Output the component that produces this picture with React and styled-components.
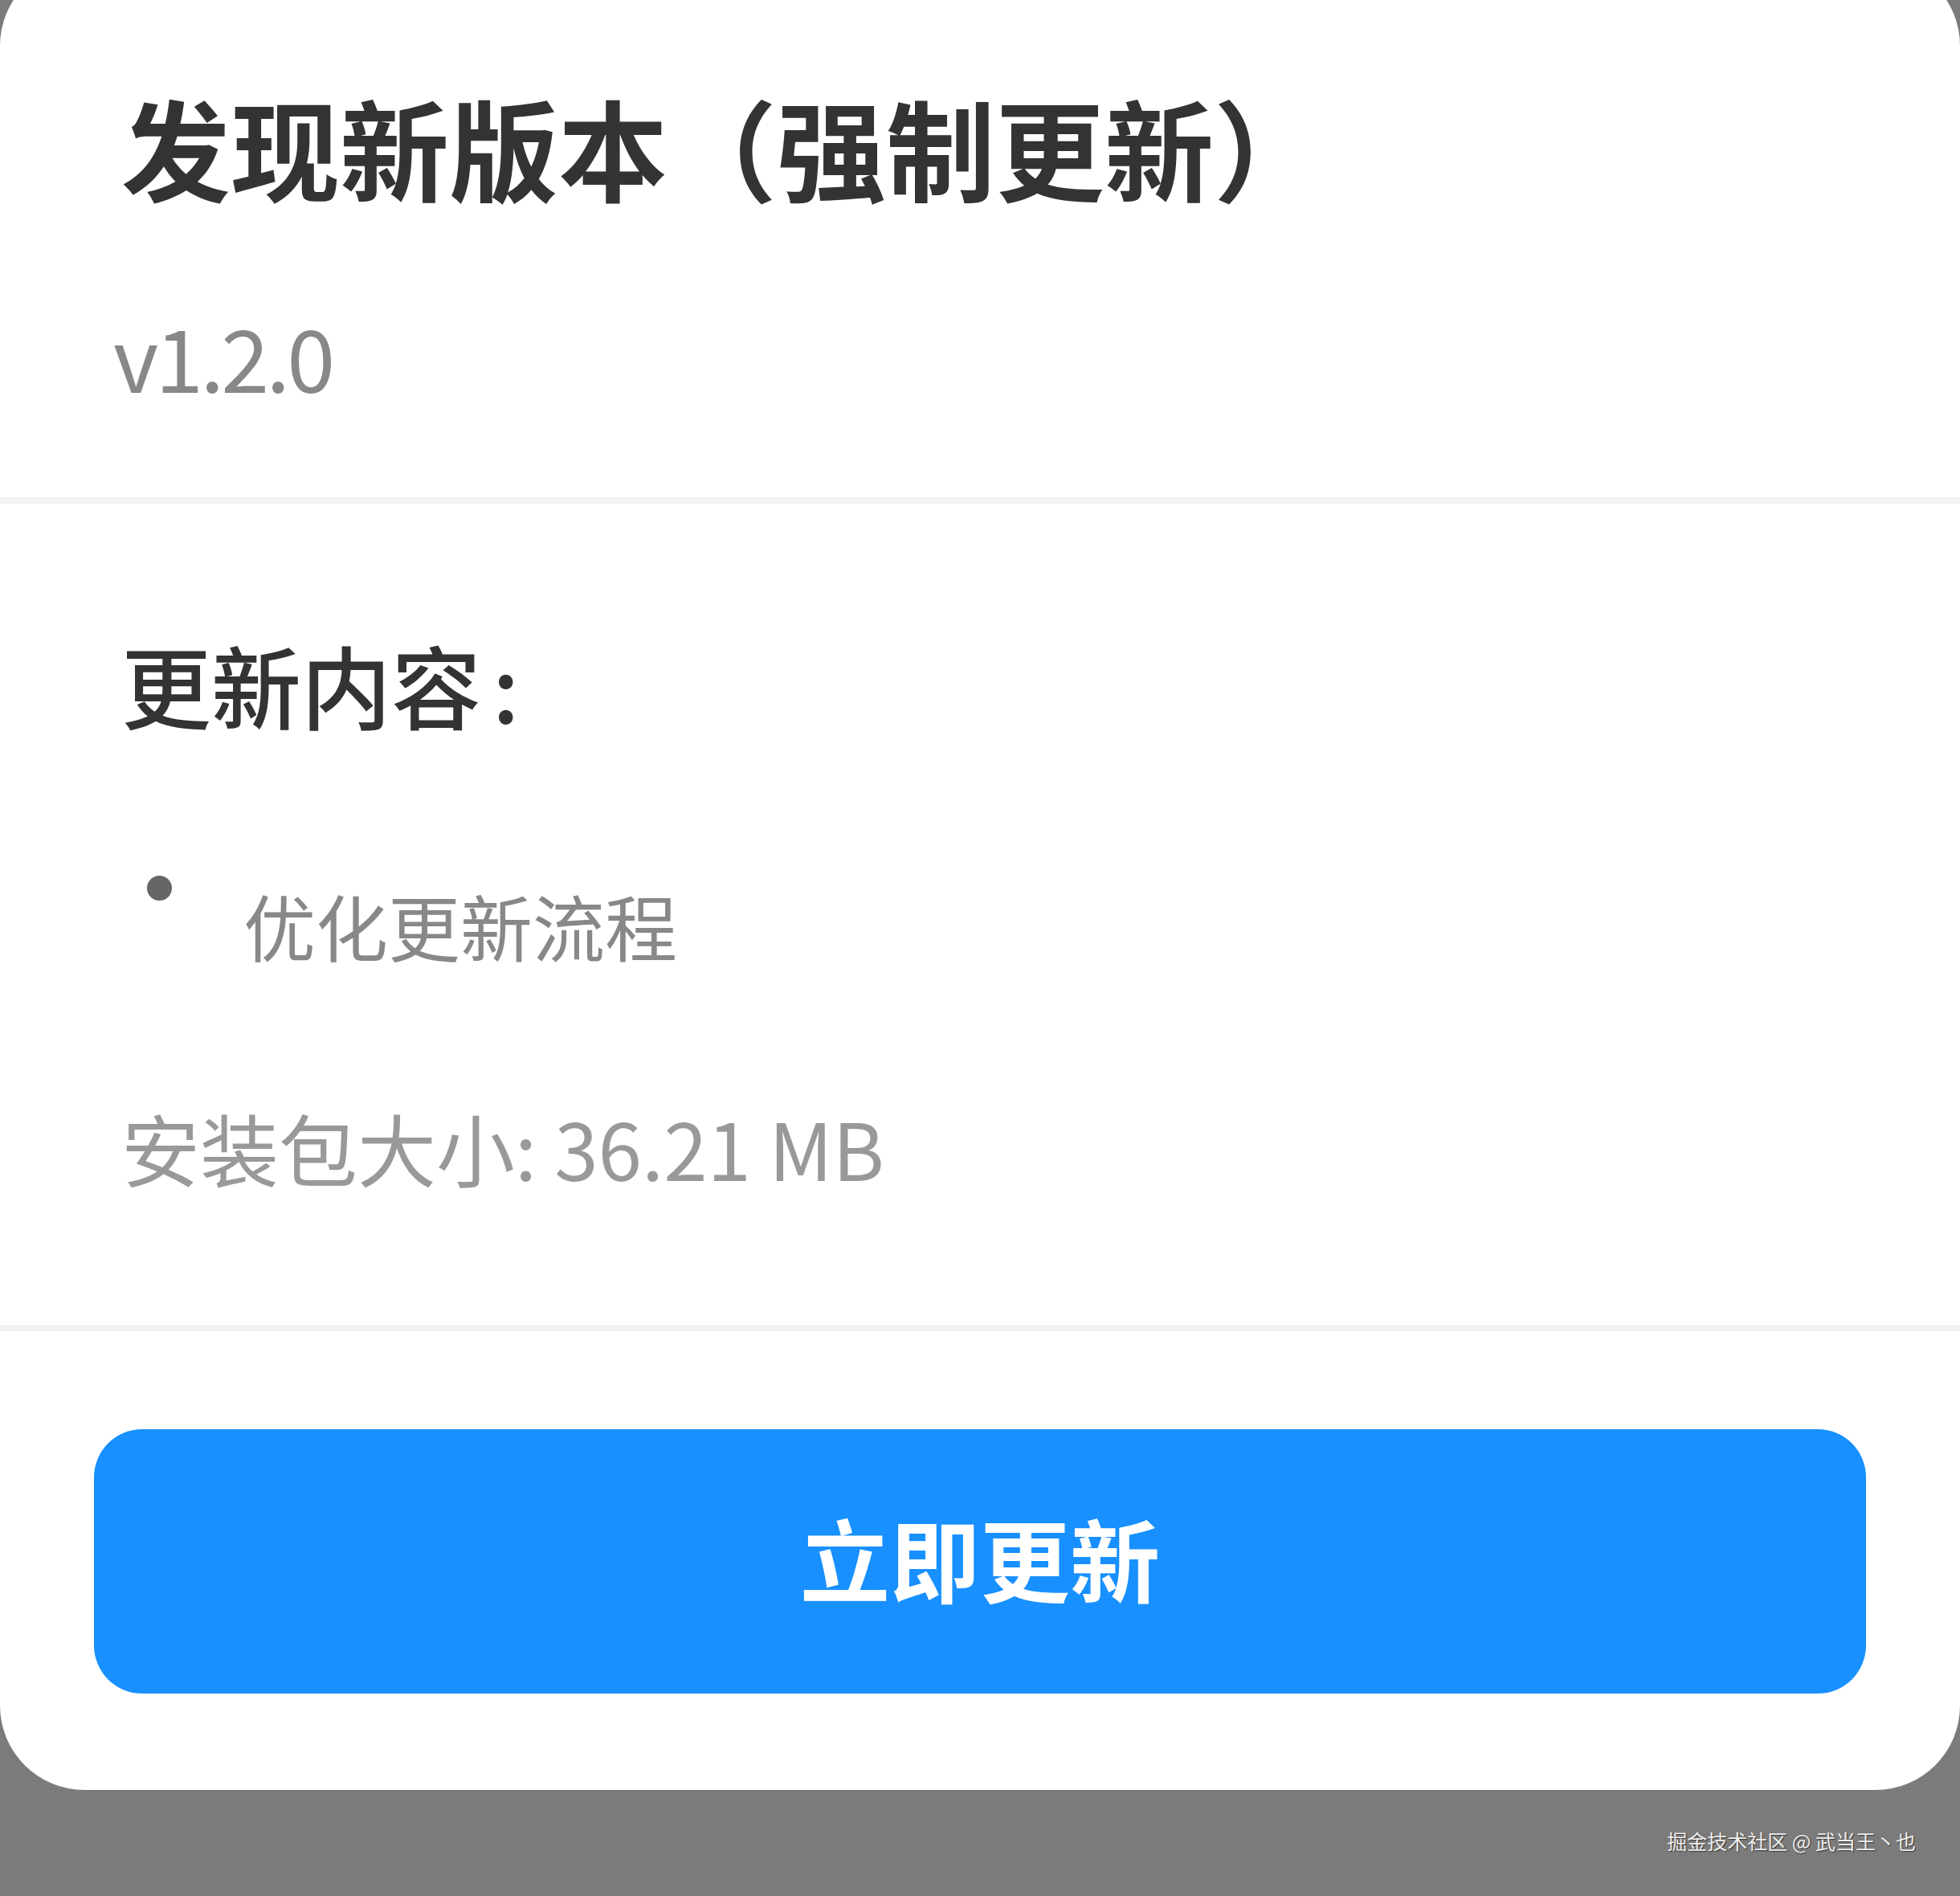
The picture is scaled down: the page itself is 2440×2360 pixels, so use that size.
import React from 'react'
import styled, {createGlobalStyle} from 'styled-components'

const info = {
    title: '发现新版本（强制更新）',
    version: 'v1.2.0',
    notes: ['优化更新流程'],
    size: '36.21 MB',
}

export default function App() {
    return (
        <>
            <GlobalStyle/>
            <Page>
                <Card>
                    <Header>
                        <Title>{info.title}</Title>
                        <Version>{info.version}</Version>
                    </Header>
                    <Divider/>
                    <Body>
                        <SectionTitle>更新内容<Colon>:</Colon></SectionTitle>
                        <NoteList>
                            {info.notes.map(note => (
                                <Note key={note}>
                                    <Dot/>
                                    <NoteText>{note}</NoteText>
                                </Note>
                            ))}
                        </NoteList>
                        <Size>安装包大小: {info.size}</Size>
                    </Body>
                    <Divider/>
                    <Footer>
                        <UpdateButton>立即更新</UpdateButton>
                    </Footer>
                </Card>
                <Strip>
                    <Watermark>掘金技术社区 @ 武当王丶也</Watermark>
                </Strip>
            </Page>
        </>
    )
}

//---------------------------STYLES-------------------------------------------//

const GlobalStyle = createGlobalStyle`
    html, body {
        margin: 0;
        padding: 0;
        background: #7b7b7b;
    }
    body {
        font-family: "Noto Sans CJK SC", "Noto Sans", sans-serif;
    }
`
const Page = styled.div`
    width: 2440px;
    height: 2360px;
    overflow: hidden;
    display: flex;
    flex-direction: column;
    background: #7b7b7b;
`
const Card = styled.div`
    margin-top: -48px;
    height: 2276px;
    background: #fff;
    border-radius: 105px;
    display: flex;
    flex-direction: column;
`
const Header = styled.div`
    padding: 162px 0 123px 151px;
    display: flex;
    flex-direction: column;
    gap: 138px;
`
const Title = styled.h1`
    margin: 0;
    font-size: 136px;
    line-height: 1;
    font-weight: 700;
    color: #333;
`
const Version = styled.div`
    margin-left: -10px;
    font-size: 108px;
    line-height: 1;
    letter-spacing: -4px;
    color: #888;
`
const Divider = styled.div`
    height: 8px;
    background: #f2f2f2;
`
const Body = styled.div`
    padding: 168px 0 173px 151px;
    display: flex;
    flex-direction: column;
`
const SectionTitle = styled.h2`
    margin: 0;
    font-size: 112px;
    line-height: 1;
    font-weight: 500;
    color: #333;
`
const Colon = styled.span`
    margin-left: 14px;
`
const NoteList = styled.ul`
    list-style: none;
    margin: 199px 0 182px;
    padding: 0;
`
const Note = styled.li`
    display: flex;
    align-items: flex-start;
`
const Dot = styled.span`
    width: 31px;
    height: 31px;
    border-radius: 50%;
    background: #666;
    margin: -16px 89px 0 32px;
    flex-shrink: 0;
`
const NoteText = styled.span`
    font-size: 90px;
    line-height: 1;
    color: #888;
`
const Size = styled.div`
    font-size: 98px;
    line-height: 1;
    color: #999;
`
const Footer = styled.div`
    padding: 122px 117px 0;
`
const UpdateButton = styled.button`
    width: 100%;
    height: 329px;
    padding: 0 0 12px;
    border: none;
    border-radius: 60px;
    background: #1890ff;
    color: #fff;
    font-family: "Noto Sans CJK SC", sans-serif;
    font-size: 112px;
    font-weight: 700;
    line-height: 1;
    display: flex;
    align-items: center;
    justify-content: center;
    cursor: pointer;
`
const Strip = styled.div`
    flex: 1;
    display: flex;
    justify-content: flex-end;
    align-items: center;
    padding: 0 55px 6px 0;
`
const Watermark = styled.span`
    font-size: 25px;
    line-height: 1;
    color: #eee;
    text-shadow: 1px 1px 1px #333;
`
